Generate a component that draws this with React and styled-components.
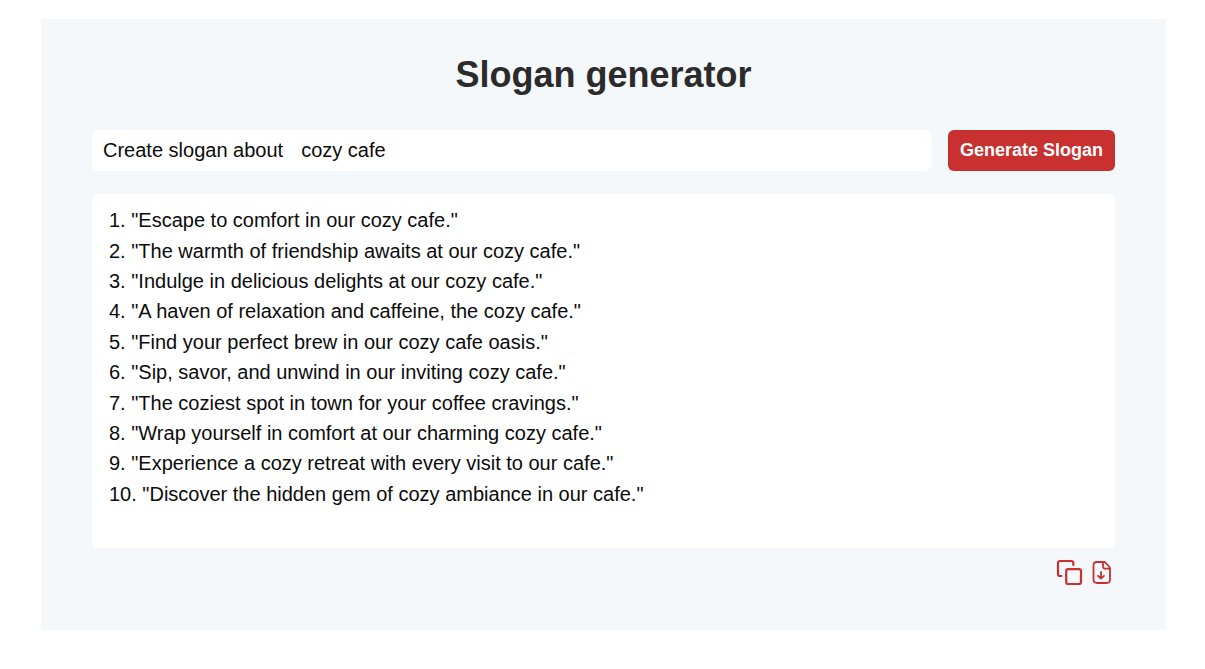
import React, { useState } from 'react';
import styled, { createGlobalStyle } from 'styled-components';

const GlobalStyle = createGlobalStyle`
  body {
    margin: 0;
    background: #fff;
    font-family: Arial, 'Liberation Sans', sans-serif;
  }

  * {
    box-sizing: border-box;
  }
`;

const GeneratorContainer = styled.main`
  margin: 19px 39px 39px 41px;
  padding: 32px 51px 43px;
  background-color: #f4f8fb;
`;

const Title = styled.h1`
  margin: 0 0 31px;
  font-size: 36px;
  line-height: 48px;
  font-weight: bold;
  text-align: center;
  color: #2b2b2b;
`;

const Form = styled.form`
  display: flex;
  gap: 17px;
  margin-bottom: 23px;
`;

const InputGroup = styled.div`
  display: flex;
  flex: 1;
  align-items: center;
  gap: 18px;
  padding: 0 11px;
  border-radius: 6px;
  background-color: #fff;
  font-size: 20px;
`;

const InputLabel = styled.label`
  white-space: nowrap;
  color: #0c0c0c;
`;

const InputField = styled.input`
  flex: 1;
  min-width: 0;
  padding: 0;
  border: none;
  outline: none;
  background: transparent;
  font: inherit;
  color: #0c0c0c;
`;

const Button = styled.button`
  padding: 0 12px;
  height: 41px;
  border: none;
  border-radius: 6px;
  background-color: #c93030;
  color: white;
  font-family: inherit;
  font-size: 18px;
  font-weight: bold;
  cursor: pointer;
`;

const Output = styled.section`
  padding: 11px 17px 39px;
  border-radius: 6px;
  background-color: #fff;
`;

const SloganList = styled.ol`
  display: grid;
  grid-auto-rows: 1fr;
  align-items: center;
  min-height: 304px;
  margin: 0;
  padding: 0;
  list-style: none;
  font-size: 20px;
  line-height: 30px;
  color: #0c0c0c;
`;

const Actions = styled.div`
  display: flex;
  justify-content: flex-end;
  gap: 6px;
  padding: 9px 3px 0 0;
`;

const IconButton = styled.button`
  display: flex;
  align-items: center;
  justify-content: center;
  padding: 0;
  height: 30px;
  border: none;
  background: transparent;
  color: #c93030;
  cursor: pointer;
`;

const CopyIcon = () => (
  <svg width="30" height="30" viewBox="0 0 30 30" fill="none" stroke="currentColor" strokeWidth="2.2" strokeLinecap="round" strokeLinejoin="round">
    <rect x="12.2" y="12.2" width="14.8" height="14.8" rx="2" />
    <path d="M7.5 19H6a2 2 0 0 1-2-2V6a2 2 0 0 1 2-2h11.3a2 2 0 0 1 2 2v2" />
  </svg>
);

const DownloadIcon = () => (
  <svg width="22" height="30" viewBox="0 0 22 30" fill="none" stroke="currentColor" strokeWidth="1.8" strokeLinecap="round" strokeLinejoin="round">
    <path d="M14 5H7Q3.5 5 3.5 8.5v14Q3.5 26 7 26h9.5q3.5 0 3.5-3.5V12q0-1.5-1-2.5l-3.2-3.5Q15 5 14 5z" />
    <path d="M13 5.2v4q0 2.5 2.5 2.5h4.2" />
    <path d="M11 15v6.5M8 18.8l3 2.7 3-2.7" />
  </svg>
);

const results = [
  'Escape to comfort in our cozy cafe.',
  'The warmth of friendship awaits at our cozy cafe.',
  'Indulge in delicious delights at our cozy cafe.',
  'A haven of relaxation and caffeine, the cozy cafe.',
  'Find your perfect brew in our cozy cafe oasis.',
  'Sip, savor, and unwind in our inviting cozy cafe.',
  'The coziest spot in town for your coffee cravings.',
  'Wrap yourself in comfort at our charming cozy cafe.',
  'Experience a cozy retreat with every visit to our cafe.',
  'Discover the hidden gem of cozy ambiance in our cafe.',
];

const App = () => {
  const [topic, setTopic] = useState('cozy cafe');
  const [slogans, setSlogans] = useState(results);

  const text = slogans.map((slogan, i) => `${i + 1}. "${slogan}"`);

  const handleSubmit = (e) => {
    e.preventDefault();
    setSlogans(results.map((slogan) => slogan.replace('cozy cafe', topic)));
  };

  const handleCopy = () => {
    navigator.clipboard.writeText(text.join('\n'));
  };

  const handleDownload = () => {
    const url = URL.createObjectURL(new Blob([text.join('\n')], { type: 'text/plain' }));
    const link = document.createElement('a');
    link.href = url;
    link.download = 'slogans.txt';
    link.click();
    URL.revokeObjectURL(url);
  };

  return (
    <>
      <GlobalStyle />
      <GeneratorContainer>
        <Title>Slogan generator</Title>
        <Form onSubmit={handleSubmit}>
          <InputGroup>
            <InputLabel htmlFor="topic">Create slogan about</InputLabel>
            <InputField
              id="topic"
              type="text"
              value={topic}
              onChange={(e) => setTopic(e.target.value)}
            />
          </InputGroup>
          <Button type="submit">Generate Slogan</Button>
        </Form>
        <Output>
          <SloganList>
            {text.map((line) => (
              <li key={line}>{line}</li>
            ))}
          </SloganList>
        </Output>
        <Actions>
          <IconButton type="button" aria-label="Copy slogans" onClick={handleCopy}>
            <CopyIcon />
          </IconButton>
          <IconButton type="button" aria-label="Download slogans" onClick={handleDownload}>
            <DownloadIcon />
          </IconButton>
        </Actions>
      </GeneratorContainer>
    </>
  );
};

export default App;
